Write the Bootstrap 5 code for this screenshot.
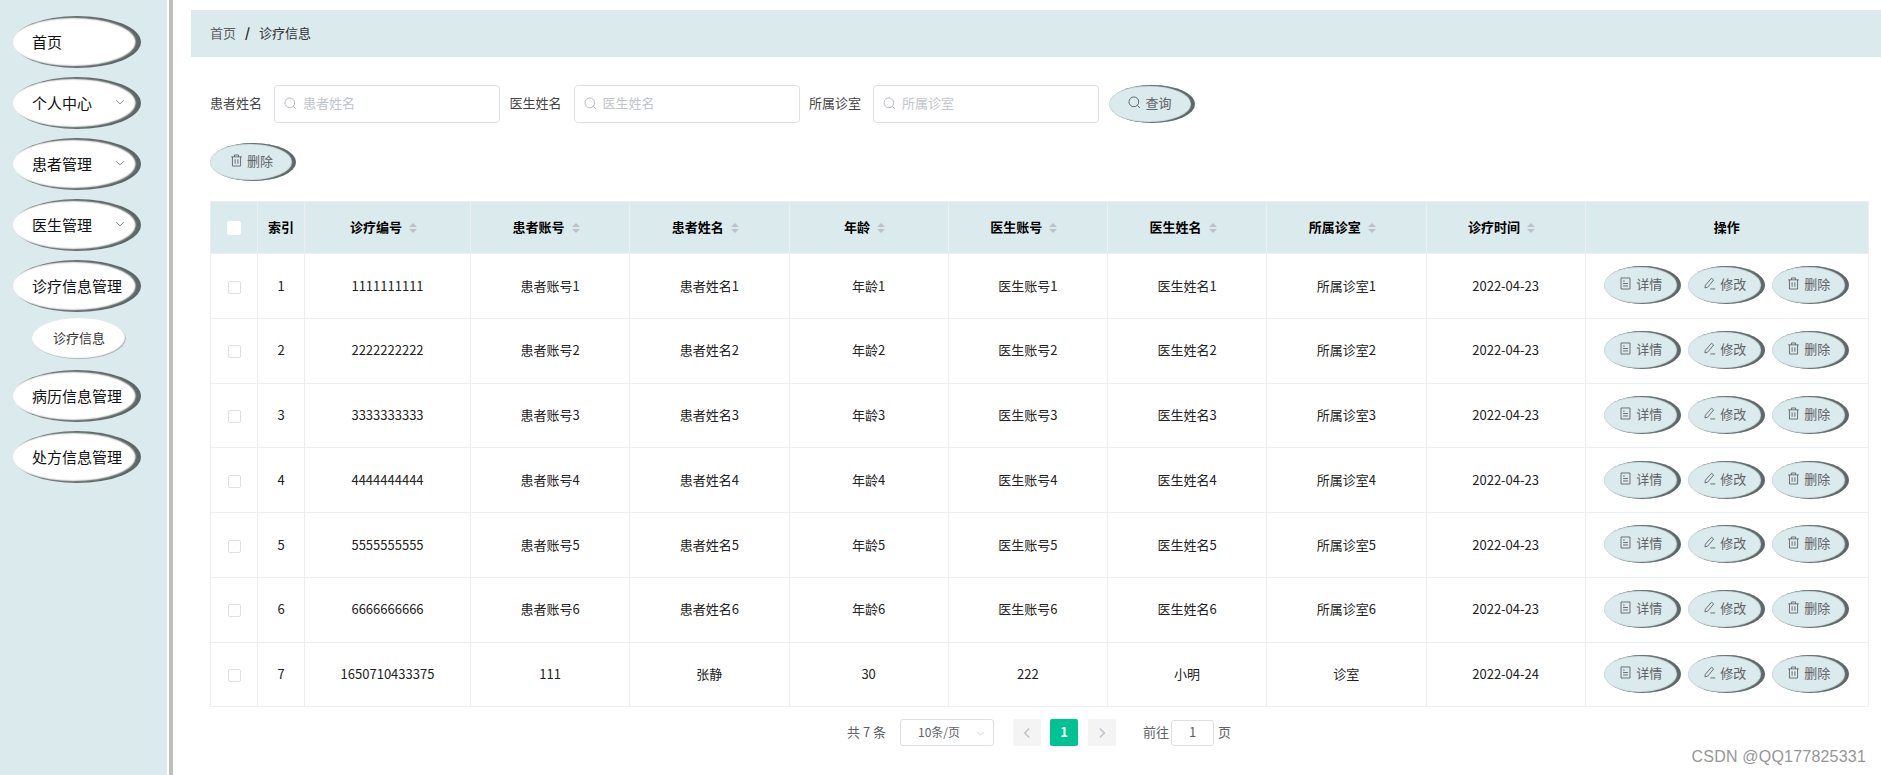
<!DOCTYPE html>
<html lang="zh">
<head>
<meta charset="utf-8">
<title>诊疗信息</title>
<link href="https://cdn.jsdelivr.net/npm/bootstrap@5.3.0/dist/css/bootstrap.min.css" rel="stylesheet">
<style>
html,body{height:775px;overflow:hidden;background:#fff}
body{font-family:"Noto Sans CJK SC","Liberation Sans",sans-serif;font-size:13px;color:#222}
.side-pane{width:167px;height:775px;background:#dbeaed;padding-top:16px;flex:none}
.side-gap{width:2px;flex:none}
.side-rule{width:4px;background:#bdbfbc;flex:none}
.main-pane{margin-left:18px;flex:1;min-width:0;position:relative}
.egg{display:flex;align-items:center;justify-content:space-between;width:128px;height:52px;margin:0 0 9px 13px;padding:0 16px 2px 19px;border-radius:50%;background:#fff;color:#111;font-size:15px;line-height:1;white-space:nowrap;text-decoration:none;box-shadow:inset -3.5px 0 1.5px 2px #5d6767}
.egg svg{width:10px;height:10px;color:#6a7474;flex:none}
.egg-sub{display:flex;align-items:center;justify-content:center;width:94px;height:41px;margin:-3px 0 11px 32px;padding-bottom:2px;border-radius:50%;background:#fff;color:#333;font-size:13px;text-decoration:none;box-shadow:inset -1px -1px 1px 0 #aab2b2}
.crumb-bar{margin:10px 0 0;height:47px;padding:0 19px 2px;background:#dbeaed;display:flex;align-items:center;gap:9px;font-size:13px;color:#303133}
.crumb-home{color:#606266}
.crumb-sep{font-weight:700;color:#222}
.filter-row{margin:28px 0 0 19px;display:flex;align-items:center;height:38px}
.filter-label{width:52px;color:#444;white-space:nowrap;flex:none;padding-bottom:2px}
.filter-box{width:226px;margin:0 9.5px 0 12px;position:relative;flex:none}
.filter-box .form-control{height:38px;padding:0 10px 3px 28px;font-size:13px;border:1px solid #dcdfe6;border-radius:4px}
.filter-box .form-control::placeholder{color:#c0c4cc}
.filter-box svg{position:absolute;left:10px;top:12px;width:13px;height:13px;color:#b6bac2}
.oval-btn{display:inline-flex;align-items:center;justify-content:center;gap:4px;height:38px;padding:0 3px 3px 0;border:0;border-radius:50%;background:#dbeaed;color:#606266;font-size:13px;line-height:1;white-space:nowrap;box-shadow:inset -3px 0 1px 1px #5d6767,inset 0 0 1px 0 #9aa3a3}
.oval-btn:hover{background:#dbeaed;color:#606266}
.oval-btn svg{width:13px;height:13px;flex:none}
.oval-wide{width:86px}
.oval-cell{width:77px}
.delete-row{margin:20px 0 0 19px;height:38px}
.grid-wrap{margin:20px 13px 0 19px}
.grid-table{table-layout:fixed;width:1658px;margin:0;border-color:#ebeef5;color:#222;font-size:13px}
.grid-table th,.grid-table td{padding:0;text-align:center;vertical-align:middle;border-color:#ebeef5}
.grid-table thead th{padding-bottom:2px}
.grid-table tbody td{padding-bottom:1px}
.grid-table thead tr{height:52px}
.grid-table thead th{background:#dbeaed;color:#000;font-weight:700;font-size:13px}
.grid-table tbody tr{height:64.75px}
.sort-mark{display:inline-flex;flex-direction:column;gap:2px;margin:0 8px 0 7px;vertical-align:middle}
.sort-mark i{display:block;width:0;height:0;border:4.5px solid transparent;border-top-width:0;border-bottom:4px solid #bcc0c8}
.sort-mark i+i{border-bottom-width:0;border-top:4px solid #bcc0c8}
.tick{display:inline-block;width:13px;height:13px;border:1px solid #dcdfe6;border-radius:2px;background:#fff;vertical-align:middle}
.tick-head{border-color:#fff;width:14px;height:14px}
.cell-actions{display:flex;justify-content:center;gap:7px;padding-right:1px}
.pager-row{margin-top:12px;height:27px;display:flex;align-items:center;color:#606266;font-size:13px;padding-left:656px}
.pager-total{width:53px;white-space:nowrap;padding-bottom:3px}
.pager-size{width:94px;height:27px;border:1px solid #dcdfe6;border-radius:3px;display:flex;align-items:center;justify-content:center;position:relative;padding:0 16px 2px 0;font-size:12px}
.pager-size svg{position:absolute;right:8px;top:9px;width:9px;height:9px;color:#c0c4cc}
.pager-step{width:28px;height:27px;background:#f4f4f5;border-radius:2px;display:flex;align-items:center;justify-content:center;color:#c0c4cc}
.pager-step svg{width:12px;height:12px}
.pager-on{background:#00c292;color:#fff;font-weight:700;font-size:13px;margin:0 10px 0 9px;padding-bottom:2px}
.pager-prev{margin-left:19px}
.pager-jump{margin-left:27px;padding-bottom:3px}
.pager-input{width:43px;height:26px;border:1px solid #dcdfe6;border-radius:3px;display:flex;align-items:center;justify-content:center;margin:0 4px 0 2px;padding-bottom:2px;font-size:13px}
.pager-end{padding-bottom:3px}
.mark-csdn{position:absolute;right:15px;bottom:8px;font-family:"Liberation Sans",sans-serif;font-size:16px;letter-spacing:.2px;color:#969696;line-height:20px}
</style>
</head>
<body class="d-flex">
<svg width="0" height="0" class="position-absolute">
<symbol id="i-search" viewBox="0 0 16 16"><circle cx="7.2" cy="7.2" r="6" fill="none" stroke="currentColor" stroke-width="1.2"/><path d="M11.6 11.6l3 3" fill="none" stroke="currentColor" stroke-width="1.2"/></symbol>
<symbol id="i-trash" viewBox="0 0 16 16"><path d="M1.5 3.5h13M5.5 3.5V1.2h5v2.3M3 3.5v11.3h10V3.5M6.3 6.5v5.5M9.7 6.5v5.5" fill="none" stroke="currentColor" stroke-width="1.1"/></symbol>
<symbol id="i-doc" viewBox="0 0 16 16"><path d="M2.5 1.2h11v13.6h-11zM5 5h2M5 8h6M5 11h6" fill="none" stroke="currentColor" stroke-width="1.1"/></symbol>
<symbol id="i-edit" viewBox="0 0 16 16"><path d="M10.5 1.5l2.6 2.2-7.4 8.8-3.3 1 .5-3.3zM9 14.7h6" fill="none" stroke="currentColor" stroke-width="1.1"/></symbol>
<symbol id="i-down" viewBox="0 0 16 16"><path d="M2 5l6 6 6-6" fill="none" stroke="currentColor" stroke-width="1.4"/></symbol>
<symbol id="i-left" viewBox="0 0 16 16"><path d="M11 2L5 8l6 6" fill="none" stroke="currentColor" stroke-width="2.2"/></symbol>
<symbol id="i-right" viewBox="0 0 16 16"><path d="M5 2l6 6-6 6" fill="none" stroke="currentColor" stroke-width="2.2"/></symbol>
</svg>

<aside class="side-pane">
<nav class="nav flex-column flex-nowrap">
<a class="egg" href="#">首页</a>
<a class="egg" href="#">个人中心<svg><use href="#i-down"/></svg></a>
<a class="egg" href="#">患者管理<svg><use href="#i-down"/></svg></a>
<a class="egg" href="#">医生管理<svg><use href="#i-down"/></svg></a>
<a class="egg" href="#">诊疗信息管理</a>
<a class="egg-sub" href="#">诊疗信息</a>
<a class="egg" href="#">病历信息管理</a>
<a class="egg" href="#">处方信息管理</a>
</nav>
</aside>
<div class="side-gap"></div>
<div class="side-rule"></div>

<main class="main-pane">
<div class="crumb-bar"><span class="crumb-home">首页</span><span class="crumb-sep">/</span><span>诊疗信息</span></div>

<div class="filter-row">
<span class="filter-label">患者姓名</span>
<div class="filter-box"><svg><use href="#i-search"/></svg><input class="form-control" placeholder="患者姓名"></div>
<span class="filter-label">医生姓名</span>
<div class="filter-box"><svg><use href="#i-search"/></svg><input class="form-control" placeholder="医生姓名"></div>
<span class="filter-label">所属诊室</span>
<div class="filter-box"><svg><use href="#i-search"/></svg><input class="form-control" placeholder="所属诊室"></div>
<button class="btn oval-btn oval-wide"><svg><use href="#i-search"/></svg>查询</button>
</div>

<div class="delete-row"><button class="btn oval-btn oval-wide"><svg><use href="#i-trash"/></svg>删除</button></div>

<div class="grid-wrap">
<table class="table table-bordered grid-table">
<colgroup><col style="width:47px"><col style="width:47px"><col style="width:166px"><col style="width:159.25px"><col style="width:159.25px"><col style="width:159.25px"><col style="width:159.25px"><col style="width:159.25px"><col style="width:159.25px"><col style="width:159.25px"><col style="width:283px"></colgroup>
<thead><tr>
<th><span class="tick tick-head"></span></th><th>索引</th>
<th>诊疗编号<span class="sort-mark"><i></i><i></i></span></th>
<th>患者账号<span class="sort-mark"><i></i><i></i></span></th>
<th>患者姓名<span class="sort-mark"><i></i><i></i></span></th>
<th>年龄<span class="sort-mark"><i></i><i></i></span></th>
<th>医生账号<span class="sort-mark"><i></i><i></i></span></th>
<th>医生姓名<span class="sort-mark"><i></i><i></i></span></th>
<th>所属诊室<span class="sort-mark"><i></i><i></i></span></th>
<th>诊疗时间<span class="sort-mark"><i></i><i></i></span></th>
<th>操作</th>
</tr></thead>
<tbody>
<tr><td><span class="tick"></span></td><td>1</td><td>1111111111</td><td>患者账号1</td><td>患者姓名1</td><td>年龄1</td><td>医生账号1</td><td>医生姓名1</td><td>所属诊室1</td><td>2022-04-23</td><td><div class="cell-actions"><button class="btn oval-btn oval-cell"><svg><use href="#i-doc"/></svg>详情</button><button class="btn oval-btn oval-cell"><svg><use href="#i-edit"/></svg>修改</button><button class="btn oval-btn oval-cell"><svg><use href="#i-trash"/></svg>删除</button></div></td></tr>
<tr><td><span class="tick"></span></td><td>2</td><td>2222222222</td><td>患者账号2</td><td>患者姓名2</td><td>年龄2</td><td>医生账号2</td><td>医生姓名2</td><td>所属诊室2</td><td>2022-04-23</td><td><div class="cell-actions"><button class="btn oval-btn oval-cell"><svg><use href="#i-doc"/></svg>详情</button><button class="btn oval-btn oval-cell"><svg><use href="#i-edit"/></svg>修改</button><button class="btn oval-btn oval-cell"><svg><use href="#i-trash"/></svg>删除</button></div></td></tr>
<tr><td><span class="tick"></span></td><td>3</td><td>3333333333</td><td>患者账号3</td><td>患者姓名3</td><td>年龄3</td><td>医生账号3</td><td>医生姓名3</td><td>所属诊室3</td><td>2022-04-23</td><td><div class="cell-actions"><button class="btn oval-btn oval-cell"><svg><use href="#i-doc"/></svg>详情</button><button class="btn oval-btn oval-cell"><svg><use href="#i-edit"/></svg>修改</button><button class="btn oval-btn oval-cell"><svg><use href="#i-trash"/></svg>删除</button></div></td></tr>
<tr><td><span class="tick"></span></td><td>4</td><td>4444444444</td><td>患者账号4</td><td>患者姓名4</td><td>年龄4</td><td>医生账号4</td><td>医生姓名4</td><td>所属诊室4</td><td>2022-04-23</td><td><div class="cell-actions"><button class="btn oval-btn oval-cell"><svg><use href="#i-doc"/></svg>详情</button><button class="btn oval-btn oval-cell"><svg><use href="#i-edit"/></svg>修改</button><button class="btn oval-btn oval-cell"><svg><use href="#i-trash"/></svg>删除</button></div></td></tr>
<tr><td><span class="tick"></span></td><td>5</td><td>5555555555</td><td>患者账号5</td><td>患者姓名5</td><td>年龄5</td><td>医生账号5</td><td>医生姓名5</td><td>所属诊室5</td><td>2022-04-23</td><td><div class="cell-actions"><button class="btn oval-btn oval-cell"><svg><use href="#i-doc"/></svg>详情</button><button class="btn oval-btn oval-cell"><svg><use href="#i-edit"/></svg>修改</button><button class="btn oval-btn oval-cell"><svg><use href="#i-trash"/></svg>删除</button></div></td></tr>
<tr><td><span class="tick"></span></td><td>6</td><td>6666666666</td><td>患者账号6</td><td>患者姓名6</td><td>年龄6</td><td>医生账号6</td><td>医生姓名6</td><td>所属诊室6</td><td>2022-04-23</td><td><div class="cell-actions"><button class="btn oval-btn oval-cell"><svg><use href="#i-doc"/></svg>详情</button><button class="btn oval-btn oval-cell"><svg><use href="#i-edit"/></svg>修改</button><button class="btn oval-btn oval-cell"><svg><use href="#i-trash"/></svg>删除</button></div></td></tr>
<tr><td><span class="tick"></span></td><td>7</td><td>1650710433375</td><td>111</td><td>张静</td><td>30</td><td>222</td><td>小明</td><td>诊室</td><td>2022-04-24</td><td><div class="cell-actions"><button class="btn oval-btn oval-cell"><svg><use href="#i-doc"/></svg>详情</button><button class="btn oval-btn oval-cell"><svg><use href="#i-edit"/></svg>修改</button><button class="btn oval-btn oval-cell"><svg><use href="#i-trash"/></svg>删除</button></div></td></tr>
</tbody>
</table>
</div>

<div class="pager-row">
<span class="pager-total">共 7 条</span>
<div class="pager-size">10条/页<svg><use href="#i-down"/></svg></div>
<div class="pager-step pager-prev"><svg><use href="#i-left"/></svg></div>
<div class="pager-step pager-on">1</div>
<div class="pager-step"><svg><use href="#i-right"/></svg></div>
<span class="pager-jump">前往</span>
<div class="pager-input">1</div>
<span class="pager-end">页</span>
</div>
<div class="mark-csdn">CSDN @QQ177825331</div>
</main>
</body>
</html>
